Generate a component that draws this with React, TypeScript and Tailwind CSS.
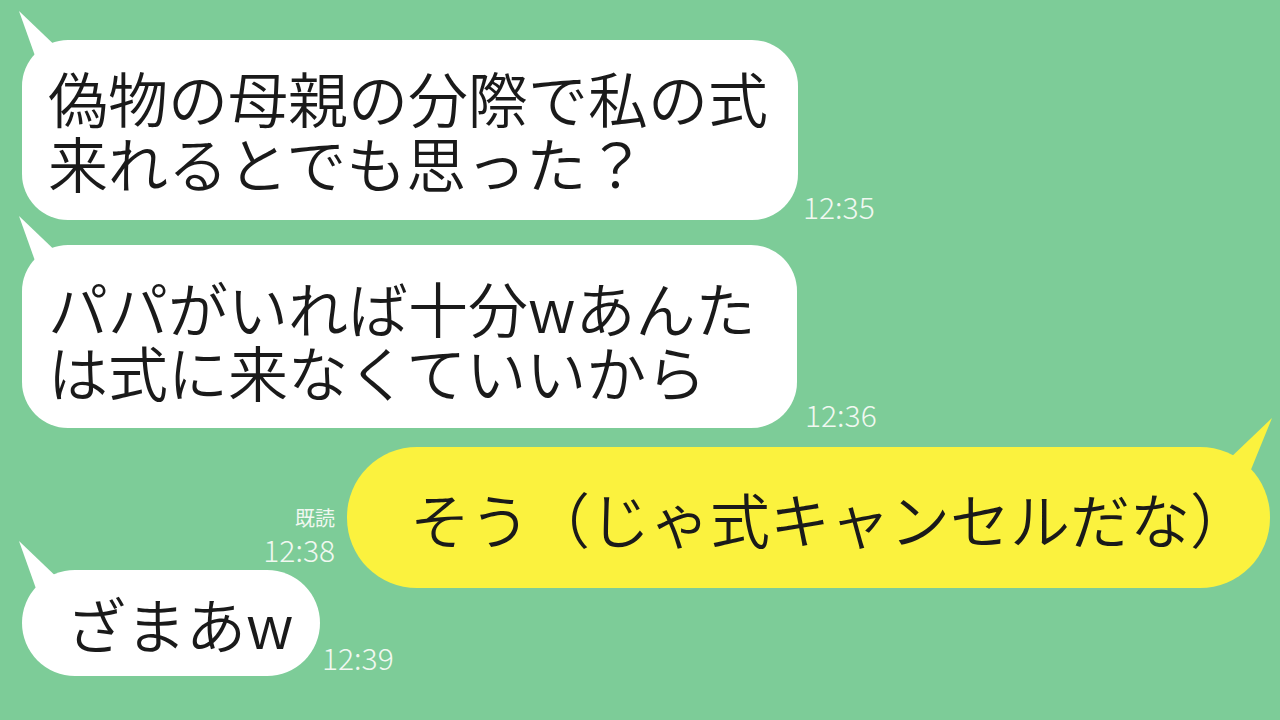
import React from "react";

const FONT = { fontFamily: '"Noto Sans CJK JP", "Noto Sans", sans-serif' };

function LeftTail() {
  return (
    <svg
      className="absolute left-[-5px] top-[-31px]"
      width="60"
      height="70"
      viewBox="0 0 60 70"
    >
      <polygon points="2,2 22,58 48,46" fill="#ffffff" />
    </svg>
  );
}

function RightTail() {
  return (
    <svg
      className="absolute right-[-4px] top-[-31px]"
      width="60"
      height="70"
      viewBox="0 0 60 70"
    >
      <polygon points="58,2 14,44 36,56" fill="#fbf23e" />
    </svg>
  );
}

function Time({ t, className = "" }: { t: string; className?: string }) {
  return (
    <div
      className={`text-[30px] leading-[30px] font-light text-[#f1f8f1] ${className}`}
    >
      {t}
    </div>
  );
}

export default function App() {
  return (
    <div
      className="w-[1280px] h-[720px] bg-[#7dcc98] overflow-hidden flex flex-col text-[#1a1a1a] font-[350]"
      style={FONT}
    >
      {/* message 1 */}
      <div className="flex items-end mt-[40px] ml-[22px]">
        <div className="relative w-[776px] h-[180px] bg-white rounded-[46px] pl-[26px] pt-[24px]">
          <LeftTail />
          <div className="relative text-[60px] leading-[65px]">
            偽物の母親の分際で私の式
            <br />
            来れるとでも思った？
          </div>
        </div>
        <Time t="12:35" className="ml-[5px] mb-[-1px]" />
      </div>

      {/* message 2 */}
      <div className="flex items-end mt-[25px] ml-[22px]">
        <div className="relative w-[775px] h-[183px] bg-white rounded-[46px] pl-[26px] pt-[30px]">
          <LeftTail />
          <div className="relative text-[60px] leading-[64px]">
            パパがいれば十分wあんた
            <br />
            は式に来なくていいから
          </div>
        </div>
        <Time t="12:36" className="ml-[8px] mb-[-1px]" />
      </div>

      {/* message 3 (mine) */}
      <div className="flex items-end justify-end mt-[19px] mr-[10px]">
        <div className="flex flex-col items-end mr-[12px] mb-[24px]">
          <div className="text-[20px] leading-[22px] font-normal text-[#f1f8f1] mb-[5px]">既読</div>
          <Time t="12:38" />
        </div>
        <div className="relative w-[923px] h-[141px] bg-[#fbf23e] rounded-[70px] pl-[63px] flex items-center">
          <RightTail />
          <div className="relative text-[60px] leading-[70px]">
            そう（じゃ式キャンセルだな）
          </div>
        </div>
      </div>

      {/* message 4 */}
      <div className="flex items-end mt-[-18px] ml-[22px]">
        <div className="relative w-[298px] h-[106px] bg-white rounded-[53px] pl-[44px] flex items-center">
          <LeftTail />
          <div className="relative text-[60px] leading-[70px]">ざまあw</div>
        </div>
        <Time t="12:39" className="ml-[2px] mb-[4px]" />
      </div>
    </div>
  );
}
